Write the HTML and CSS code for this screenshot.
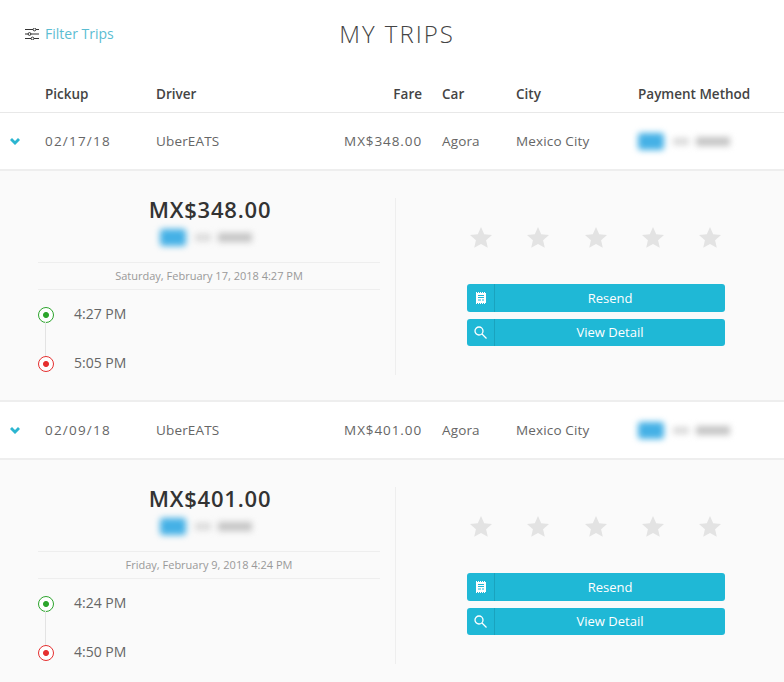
FILE: index.html
```html
<!DOCTYPE html>
<html lang="en">

<head>
  <meta charset="UTF-8" />
  <title>My Trips</title>
  <link rel="stylesheet" href="styles.css">
</head>

<body>
  <header class="page-header">
    <a class="filter-link" href="#">
      <svg class="filter-icon" width="14" height="12" viewBox="0 0 14 12" fill="none" stroke="#333" stroke-width="1">
        <path d="M0 1.5h14M0 6h14M0 10.5h14" />
        <circle cx="9.500" cy="1.500" r="1.400" fill="#fff" />
        <circle cx="4.500" cy="6" r="1.400" fill="#fff" />
        <circle cx="7.500" cy="10.500" r="1.400" fill="#fff" />
      </svg>
      Filter Trips
    </a>
    <h1>MY TRIPS</h1>
  </header>

  <div class="trip-row table-head">
    <span></span>
    <span>Pickup</span>
    <span>Driver</span>
    <span class="fare">Fare</span>
    <span class="car">Car</span>
    <span>City</span>
    <span>Payment Method</span>
  </div>

  <section class="trip">
    <div class="trip-row">
      <svg class="chevron" width="10" height="7" viewBox="0 0 10 7"><path d="M0 2 2 0 5 3 8 0 10 2 5 7z" /></svg>
      <span class="date">02/17/18</span>
      <span>UberEATS</span>
      <span class="fare">MX$348.00</span>
      <span class="car">Agora</span>
      <span>Mexico City</span>
      <span class="card"><i class="card-logo"></i><i class="card-dots"></i><i class="card-num"></i></span>
    </div>
    <div class="trip-detail">
      <div class="summary">
        <div class="amount">MX$348.00</div>
        <span class="card"><i class="card-logo"></i><i class="card-dots"></i><i class="card-num"></i></span>
        <div class="trip-date">Saturday, February 17, 2018 4:27 PM</div>
        <ul class="stops">
          <li class="stop pickup">4:27 PM</li>
          <li class="stop dropoff">5:05 PM</li>
        </ul>
      </div>
      <div class="actions">
        <div class="stars">
          <svg width="22" height="21" viewBox="0 0 22 21"><path d="M11 0l3.2 7.2 7.8.8-5.9 5.2 1.7 7.6L11 16.9l-6.800 3.900 1.700-7.600L0 8l7.800-.8z" /></svg>
          <svg width="22" height="21" viewBox="0 0 22 21"><path d="M11 0l3.2 7.2 7.8.8-5.9 5.2 1.7 7.6L11 16.9l-6.800 3.900 1.700-7.600L0 8l7.800-.8z" /></svg>
          <svg width="22" height="21" viewBox="0 0 22 21"><path d="M11 0l3.2 7.2 7.8.8-5.9 5.2 1.7 7.6L11 16.9l-6.800 3.900 1.700-7.600L0 8l7.800-.8z" /></svg>
          <svg width="22" height="21" viewBox="0 0 22 21"><path d="M11 0l3.2 7.2 7.8.8-5.9 5.2 1.7 7.6L11 16.9l-6.800 3.900 1.700-7.600L0 8l7.800-.8z" /></svg>
          <svg width="22" height="21" viewBox="0 0 22 21"><path d="M11 0l3.2 7.2 7.8.8-5.9 5.2 1.7 7.6L11 16.9l-6.800 3.900 1.700-7.600L0 8l7.800-.8z" /></svg>
        </div>
        <a class="btn" href="#">
          <span class="btn-icon"><svg width="10" height="12" viewBox="0 0 10 12"><path fill="#fff" d="M0 1h10v10H0z" /><path stroke="#fff" stroke-dasharray="1 1" d="M0 .5h10M0 11.500h10" /><path stroke="#1fb8d6" d="M2 3.500h6M2 5.500h6M2 8h3M6 8h2" /></svg></span>
          <span class="btn-label">Resend</span>
        </a>
        <a class="btn" href="#">
          <span class="btn-icon"><svg width="13" height="13" viewBox="0 0 13 13" fill="none" stroke="#fff" stroke-width="1.300"><circle cx="5" cy="5" r="4" /><path d="M8 8l4.500 4.500" /></svg></span>
          <span class="btn-label">View Detail</span>
        </a>
      </div>
    </div>
  </section>

  <section class="trip">
    <div class="trip-row">
      <svg class="chevron" width="10" height="7" viewBox="0 0 10 7"><path d="M0 2 2 0 5 3 8 0 10 2 5 7z" /></svg>
      <span class="date">02/09/18</span>
      <span>UberEATS</span>
      <span class="fare">MX$401.00</span>
      <span class="car">Agora</span>
      <span>Mexico City</span>
      <span class="card"><i class="card-logo"></i><i class="card-dots"></i><i class="card-num"></i></span>
    </div>
    <div class="trip-detail">
      <div class="summary">
        <div class="amount">MX$401.00</div>
        <span class="card"><i class="card-logo"></i><i class="card-dots"></i><i class="card-num"></i></span>
        <div class="trip-date">Friday, February 9, 2018 4:24 PM</div>
        <ul class="stops">
          <li class="stop pickup">4:24 PM</li>
          <li class="stop dropoff">4:50 PM</li>
        </ul>
      </div>
      <div class="actions">
        <div class="stars">
          <svg width="22" height="21" viewBox="0 0 22 21"><path d="M11 0l3.2 7.2 7.8.8-5.9 5.2 1.7 7.6L11 16.9l-6.800 3.900 1.700-7.600L0 8l7.800-.8z" /></svg>
          <svg width="22" height="21" viewBox="0 0 22 21"><path d="M11 0l3.2 7.2 7.8.8-5.9 5.2 1.7 7.6L11 16.9l-6.800 3.900 1.700-7.600L0 8l7.800-.8z" /></svg>
          <svg width="22" height="21" viewBox="0 0 22 21"><path d="M11 0l3.2 7.2 7.8.8-5.9 5.2 1.7 7.6L11 16.9l-6.800 3.900 1.700-7.600L0 8l7.800-.8z" /></svg>
          <svg width="22" height="21" viewBox="0 0 22 21"><path d="M11 0l3.2 7.2 7.8.8-5.9 5.2 1.7 7.6L11 16.9l-6.800 3.900 1.700-7.600L0 8l7.800-.8z" /></svg>
          <svg width="22" height="21" viewBox="0 0 22 21"><path d="M11 0l3.2 7.2 7.8.8-5.9 5.2 1.7 7.6L11 16.9l-6.800 3.900 1.700-7.600L0 8l7.800-.8z" /></svg>
        </div>
        <a class="btn" href="#">
          <span class="btn-icon"><svg width="10" height="12" viewBox="0 0 10 12"><path fill="#fff" d="M0 1h10v10H0z" /><path stroke="#fff" stroke-dasharray="1 1" d="M0 .5h10M0 11.500h10" /><path stroke="#1fb8d6" d="M2 3.500h6M2 5.500h6M2 8h3M6 8h2" /></svg></span>
          <span class="btn-label">Resend</span>
        </a>
        <a class="btn" href="#">
          <span class="btn-icon"><svg width="13" height="13" viewBox="0 0 13 13" fill="none" stroke="#fff" stroke-width="1.300"><circle cx="5" cy="5" r="4" /><path d="M8 8l4.500 4.500" /></svg></span>
          <span class="btn-label">View Detail</span>
        </a>
      </div>
    </div>
  </section>
</body>

</html>
```

FILE: styles.css
```css
* {
  box-sizing: border-box;
}

html,
body {
  margin: 0;
  padding: 0;
  height: 682px;
  overflow: hidden;
  background: white;
  font-family: 'Open Sans', sans-serif;
  font-size: 14px;
  color: #666;
}

.page-header {
  position: relative;
  height: 70px;
  padding: 18px 0 0 10px;
  text-align: center;
}

.page-header h1 {
  margin: 0;
  font-size: 24px;
  line-height: 32px;
  font-weight: 300;
  letter-spacing: 2px;
  color: #444;
}

.filter-link {
  position: absolute;
  left: 25px;
  top: 24px;
  display: flex;
  align-items: center;
  gap: 6px;
  color: #5bbdd2;
  text-decoration: none;
  font-size: 14px;
  line-height: 20px;
}

.trip-row {
  display: grid;
  grid-template-columns: 45px 111px 100px 166px 94px 122px 146px;
  align-items: center;
  height: 58px;
  background: white;
  border-bottom: 2px solid #eee;
  font-size: 13.5px;
  letter-spacing: 0.15px;
}

.table-head {
  height: 43px;
  padding-top: 5px;
  border-bottom: 1px solid #e8e8e8;
  font-weight: 600;
  letter-spacing: 0;
  color: #444;
}

.date {
  letter-spacing: 1.2px;
}

.fare {
  text-align: right;
}

.trip-row .fare:not(:first-child) {
  letter-spacing: 0.9px;
}

.table-head .fare:not(:first-child) {
  letter-spacing: 0;
}

.car {
  margin-left: 20px;
}

.chevron {
  margin-left: 10px;
  fill: #2bb5d0;
}

.card {
  display: flex;
  align-items: center;
  filter: blur(3px);
}

.card i {
  display: block;
}

.card-logo {
  width: 26px;
  height: 17px;
  margin-right: 9px;
  border-radius: 3px;
  background: #45b1e6;
}

.card-dots {
  width: 16px;
  height: 7px;
  margin-right: 7px;
  background: #d8d8d8;
}

.card-num {
  width: 34px;
  height: 9px;
  background: #c4c4c4;
}

.trip-detail {
  display: flex;
  height: 231px;
  padding: 27px 0 0 38px;
  background: #fafafa;
  border-bottom: 2px solid #eee;
}

.summary {
  width: 358px;
  height: 177px;
  padding-right: 15px;
  border-right: 1px solid #eee;
  text-align: center;
}

.amount {
  margin-top: -2px;
  padding-left: 2px;
  font-size: 22px;
  line-height: 26px;
  font-weight: 600;
  letter-spacing: 0.8px;
  color: #333;
}

.summary .card {
  justify-content: center;
  height: 24px;
  margin-top: 3px;
  padding-right: 7px;
}

.trip-date {
  margin-top: 13px;
  border-top: 1px solid #eee;
  border-bottom: 1px solid #eee;
  font-size: 11px;
  line-height: 26px;
  color: #999;
}

.stops {
  margin: 0;
  padding: 11px 0 0;
  list-style: none;
  text-align: left;
}

.stop {
  position: relative;
  height: 49px;
  padding-left: 36px;
  line-height: 26px;
}

.stop::before {
  content: "";
  position: absolute;
  left: 0;
  top: 6px;
  width: 14px;
  height: 14px;
  border: 1px solid currentColor;
  border-radius: 50%;
  background: radial-gradient(circle, currentColor 2.5px, #fff 3.5px);
}

.pickup::before {
  color: #2da52d;
}

.dropoff::before {
  color: #e53030;
}

.pickup::after {
  content: "";
  position: absolute;
  left: 7px;
  top: 21px;
  height: 35px;
  border-left: 1px solid #e3e3e3;
}

.actions {
  width: 258px;
  margin-left: 71px;
}

.stars {
  display: flex;
  justify-content: space-between;
  width: 251px;
  margin: 29px 0 36px 3px;
  fill: #e3e3e3;
}

.btn {
  display: flex;
  height: 28px;
  margin-bottom: 7px;
  border-radius: 3px;
  background: #1fb8d6;
  color: white;
  text-decoration: none;
  font-size: 13px;
  line-height: 28px;
}

.btn + .btn {
  height: 27px;
  line-height: 27px;
}

.btn-icon {
  display: flex;
  align-items: center;
  justify-content: center;
  width: 28px;
  border-right: 1px solid #1aa3be;
}

.btn-label {
  flex: 1;
  text-align: center;
}
```
